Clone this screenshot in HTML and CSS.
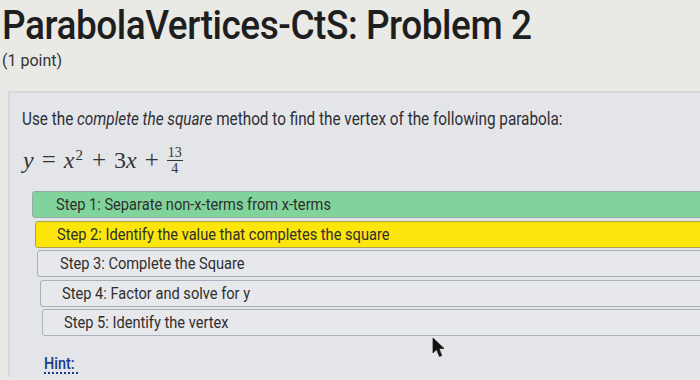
FILE: index.html
```html
<!DOCTYPE html>
<html>
<head>
<meta charset="utf-8">
<link rel="stylesheet" href="styles.css">
</head>
<body>
<div class="page">
  <h1 class="title"><span class="cond">ParabolaVertices-CtS: Problem 2</span></h1>
  <div class="points"><span class="cond">(1 point)</span></div>
  <div class="panel">
    <p class="prompt"><span class="cond">Use the <i>complete the square</i> method to find the vertex of the following parabola:</span></p>
    <div class="math">
      <i class="v">y</i><span class="op">=</span><i class="v">x</i><sup>2</sup><span class="op">+</span><span class="n">3</span><i class="v">x</i><span class="op">+</span><span class="frac"><span class="num">13</span><span class="den">4</span></span>
    </div>
    <div class="steps">
      <div class="step done"><span class="cond">Step 1: Separate non-x-terms from x-terms</span></div>
      <div class="step current"><span class="cond">Step 2: Identify the value that completes the square</span></div>
      <div class="step"><span class="cond">Step 3: Complete the Square</span></div>
      <div class="step"><span class="cond">Step 4: Factor and solve for y</span></div>
      <div class="step"><span class="cond">Step 5: Identify the vertex</span></div>
    </div>
    <div class="hint"><span class="cond">Hint:</span></div>
  </div>
  <svg class="cursor" width="14" height="21" viewBox="0 0 14 21"><path d="M1 1 L1 16 L4.5 12.5 L7.5 19.5 L9.8 18.5 L7 11.5 L12 11.5 Z" fill="#111" stroke="#222" stroke-width="0.8"/></svg>
</div>
</body>
</html>
```
FILE: styles.css
```css
html, body {
  margin: 0;
  padding: 0;
}
body {
  background: #e9e9e5;
  font-family: Roboto, "Liberation Sans", sans-serif;
  color: #2c2c2c;
  width: 700px;
  height: 380px;
  overflow: hidden;
}
.page {
  position: relative;
  padding: 4px 0 0 2px;
}
.cond {
  display: inline-block;
  transform-origin: left center;
  white-space: nowrap;
}
.title {
  margin: 0;
  font-size: 40px;
  font-weight: 500;
  line-height: 44px;
  color: #1e1e1e;
}
.title .cond {
  transform: scaleX(0.925);
  letter-spacing: -0.5px;
}
.points {
  font-size: 16px;
  line-height: 20px;
  margin-top: 3px;
  color: #333;
}
.panel {
  margin: 20px 0 0 6px;
  background: #e3e5e8;
  border-top: 2px solid #d6d8db;
  border-left: 2px solid #d6d8db;
  padding: 14px 0 0 12px;
  height: 270px;
}
.prompt {
  margin: 0;
  font-size: 18px;
  line-height: 24px;
  color: #2e2e35;
}
.prompt .cond {
  transform: scaleX(0.85);
}
.math {
  font-family: "Liberation Serif", serif;
  font-size: 24px;
  margin: 12px 0 0 1px;
  color: #333;
  display: flex;
  align-items: center;
  height: 34px;
}
.math .v {
  font-style: italic;
}
.math .op {
  margin: 0 8px;
  font-size: 25px;
}
.math sup {
  font-size: 15px;
  position: relative;
  top: -5px;
  margin-left: 1px;
  margin-right: 1px;
}
.frac {
  display: inline-flex;
  flex-direction: column;
  align-items: center;
  font-size: 14px;
  line-height: 13px;
}
.frac .num {
  border-bottom: 1px solid #333;
  padding: 0 1px 1px;
}
.frac .den {
  padding-top: 1px;
}
.steps {
  margin: 14px 0 0 10px;
  display: flex;
  flex-direction: column;
  gap: 2.5px;
}
.step {
  height: 25px;
  line-height: 25px;
  border: 1px solid #a9b0bb;
  border-radius: 3px;
  padding-left: 23px;
  font-size: 17px;
  color: #2f2f2f;
  background: #e6e8ec;
  margin-right: -20px;
}
.step .cond {
  transform: scaleX(0.86);
}
.step:nth-child(2) { margin-left: 3px; padding-left: 21px; }
.step:nth-child(3) { margin-left: 5px; padding-left: 22px; }
.step:nth-child(4) { margin-left: 8px; padding-left: 21px; }
.step:nth-child(5) { margin-left: 10px; padding-left: 21px; }
.step.done {
  background: #80d49b;
  border-color: #98aaa6;
}
.step.current {
  background: #fbe50a;
  border-color: #b3a24c;
}
.hint {
  margin: 19px 0 0 22px;
  display: inline-block;
  font-size: 16px;
  font-weight: 500;
  color: #1c3a8c;
  border-bottom: 2px dotted #1c3a8c;
  line-height: 17px;
  width: 34px;
}
.hint .cond {
  transform: scaleX(0.9);
}
.cursor {
  position: absolute;
  left: 432px;
  top: 337px;
}
```
